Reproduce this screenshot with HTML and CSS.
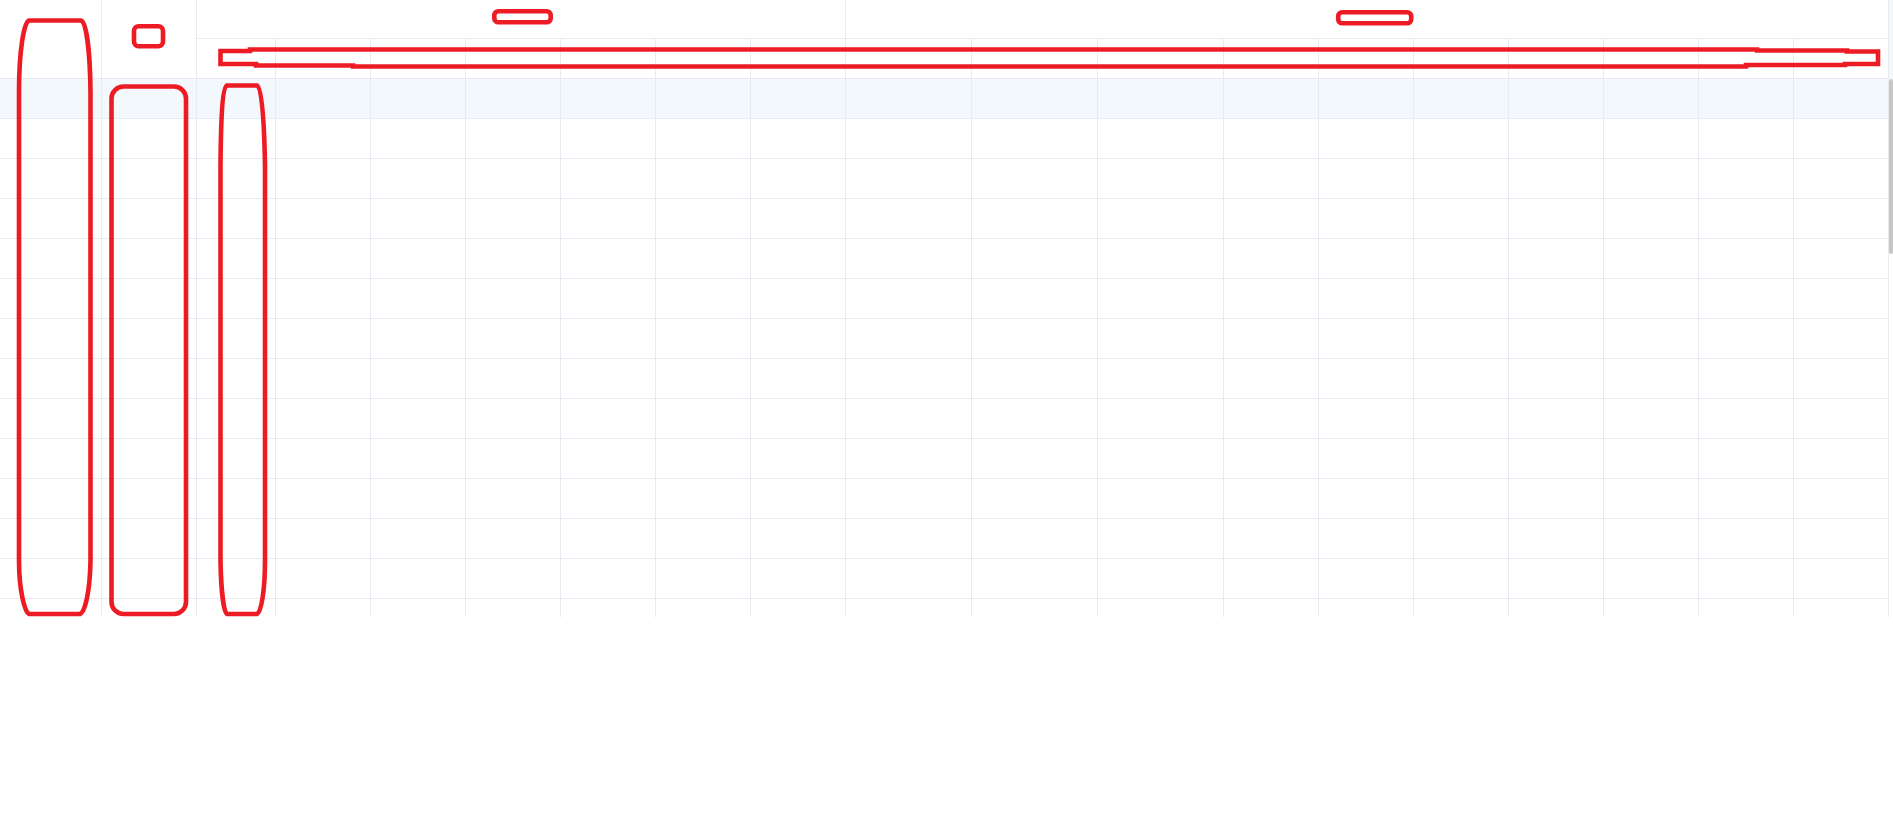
FILE: index.html
```html
<!DOCTYPE html>
<html lang="en">
<head>
<meta charset="utf-8">
<title>Schedule grid</title>
<link rel="stylesheet" href="styles.css">
</head>
<body>
<div class="page">
  <div class="grid">
    <div class="head">
      <div class="hcell side"></div>
      <div class="hcell side s2"></div>
      <div class="hcell group g1"></div>
      <div class="hcell group g2"></div>
      <div class="hcell sub"></div><div class="hcell sub"></div><div class="hcell sub"></div><div class="hcell sub"></div><div class="hcell sub"></div><div class="hcell sub"></div><div class="hcell sub"></div><div class="hcell sub"></div><div class="hcell sub"></div><div class="hcell sub"></div><div class="hcell sub"></div><div class="hcell sub"></div><div class="hcell sub"></div><div class="hcell sub"></div><div class="hcell sub"></div><div class="hcell sub"></div><div class="hcell sub"></div>
      <div class="gutter"></div>
    </div>
    <div class="body">
      <div class="rows">
        <div class="row active"><span></span><span></span><span></span><span></span><span></span><span></span><span></span><span></span><span></span><span></span><span></span><span></span><span></span><span></span><span></span><span></span><span></span><span></span><span></span></div>
        <div class="row"><span></span><span></span><span></span><span></span><span></span><span></span><span></span><span></span><span></span><span></span><span></span><span></span><span></span><span></span><span></span><span></span><span></span><span></span><span></span></div>
        <div class="row"><span></span><span></span><span></span><span></span><span></span><span></span><span></span><span></span><span></span><span></span><span></span><span></span><span></span><span></span><span></span><span></span><span></span><span></span><span></span></div>
        <div class="row"><span></span><span></span><span></span><span></span><span></span><span></span><span></span><span></span><span></span><span></span><span></span><span></span><span></span><span></span><span></span><span></span><span></span><span></span><span></span></div>
        <div class="row"><span></span><span></span><span></span><span></span><span></span><span></span><span></span><span></span><span></span><span></span><span></span><span></span><span></span><span></span><span></span><span></span><span></span><span></span><span></span></div>
        <div class="row"><span></span><span></span><span></span><span></span><span></span><span></span><span></span><span></span><span></span><span></span><span></span><span></span><span></span><span></span><span></span><span></span><span></span><span></span><span></span></div>
        <div class="row"><span></span><span></span><span></span><span></span><span></span><span></span><span></span><span></span><span></span><span></span><span></span><span></span><span></span><span></span><span></span><span></span><span></span><span></span><span></span></div>
        <div class="row"><span></span><span></span><span></span><span></span><span></span><span></span><span></span><span></span><span></span><span></span><span></span><span></span><span></span><span></span><span></span><span></span><span></span><span></span><span></span></div>
        <div class="row"><span></span><span></span><span></span><span></span><span></span><span></span><span></span><span></span><span></span><span></span><span></span><span></span><span></span><span></span><span></span><span></span><span></span><span></span><span></span></div>
        <div class="row"><span></span><span></span><span></span><span></span><span></span><span></span><span></span><span></span><span></span><span></span><span></span><span></span><span></span><span></span><span></span><span></span><span></span><span></span><span></span></div>
        <div class="row"><span></span><span></span><span></span><span></span><span></span><span></span><span></span><span></span><span></span><span></span><span></span><span></span><span></span><span></span><span></span><span></span><span></span><span></span><span></span></div>
        <div class="row"><span></span><span></span><span></span><span></span><span></span><span></span><span></span><span></span><span></span><span></span><span></span><span></span><span></span><span></span><span></span><span></span><span></span><span></span><span></span></div>
        <div class="row"><span></span><span></span><span></span><span></span><span></span><span></span><span></span><span></span><span></span><span></span><span></span><span></span><span></span><span></span><span></span><span></span><span></span><span></span><span></span></div>
        <div class="row"><span></span><span></span><span></span><span></span><span></span><span></span><span></span><span></span><span></span><span></span><span></span><span></span><span></span><span></span><span></span><span></span><span></span><span></span><span></span></div>
        <div class="row"><span></span><span></span><span></span><span></span><span></span><span></span><span></span><span></span><span></span><span></span><span></span><span></span><span></span><span></span><span></span><span></span><span></span><span></span><span></span></div>
      </div>
      <div class="track"><div class="thumb"></div></div>
    </div>
  </div>
  <svg class="marks" width="1893" height="836" viewBox="0 0 1893 836" aria-hidden="true">
    <g fill="none" stroke="#ed1c24" stroke-width="4.6">
      <path d="M29,20.5 L81,20.5 C86,22 90,50 90.5,92 L90.5,560 C90,592 85,612 80,614 L29,614 C25,612 19,592 19,560 L19,92 C19,50 24,22 29,20.5 Z"/>
      <rect x="134" y="26.2" width="29" height="20" rx="4.5"/>
      <rect x="111.5" y="86.5" width="74.5" height="527.5" rx="12"/>
      <path d="M227,85.5 L257,85.5 C261,87 264,110 265,165 L265,560 C265,592 261,612 257,614 L227,614 C224,612 221,592 220.5,560 L220.5,165 C221,110 223,87 227,85.5 Z"/>
      <path d="M220.5,51 H250 V49.5 H1757 V50.5 H1847 V51.5 H1878 V64 H1845 V65 H1746 V66.5 H353 V65.5 H256 V64 H220.5 Z" stroke-linejoin="miter"/>
      <rect x="494.3" y="11.2" width="56.4" height="11" rx="4"/>
      <rect x="1338.2" y="12.3" width="73" height="11" rx="4"/>
    </g>
  </svg>
</div>
</body>
</html>
```
FILE: styles.css
```css
* { box-sizing: border-box; }

html, body {
  margin: 0;
  padding: 0;
  background: #ffffff;
  font-family: "Noto Sans", "Liberation Sans", sans-serif;
}

.page {
  position: relative;
  width: 1893px;
  height: 836px;
  overflow: hidden;
}

.grid {
  display: flex;
  flex-direction: column;
  width: 1893px;
}

.head {
  display: grid;
  grid-template-columns: 102px 95px 79px repeat(6, 95px) repeat(3, 126px) repeat(7, 95px) 4px;
  grid-template-rows: 39px 40px;
}

.hcell {
  border-right: 1px solid #e8eaf2;
  border-bottom: 1px solid #e8eaf2;
  background: #ffffff;
}

.side { grid-row: 1 / 3; grid-column: 1; }
.side.s2 { grid-column: 2; }
.g1 { grid-row: 1; grid-column: 3 / 10; }
.g2 { grid-row: 1; grid-column: 10 / 20; }
.sub { grid-row: 2; }

.gutter {
  grid-row: 1 / 3;
  grid-column: 20;
  background: #f6f7fb;
}

.body {
  display: flex;
  height: 538px;
  overflow: hidden;
}

.rows {
  width: 1889px;
  flex: none;
}

.track {
  width: 4px;
  flex: none;
  background: #ffffff;
}

.thumb {
  height: 175px;
  background: #c7c7c7;
  border-radius: 2px 2px 2px 2px;
}

.row {
  display: grid;
  grid-template-columns: 102px 95px 79px repeat(6, 95px) repeat(3, 126px) repeat(7, 95px);
  height: 40px;
}

.row span {
  border-right: 1px solid #e8eaf2;
  border-bottom: 1px solid #e8eaf2;
}

.row.active {
  background: #f3f8fd;
}

.marks {
  position: absolute;
  left: 0;
  top: 0;
  pointer-events: none;
}
```
